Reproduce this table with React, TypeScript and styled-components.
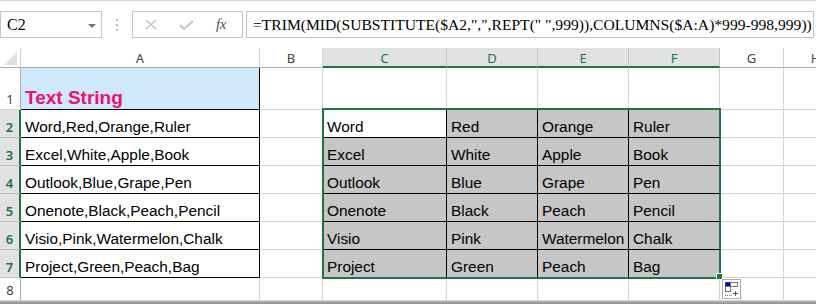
import React from 'react';
import styled, { createGlobalStyle } from 'styled-components';

const GREEN = '#217346';
const GRID = '#d4d4d4';
const INK = '#000';
const SHADE = '#c6c6c6';

const sources = [
  'Word,Red,Orange,Ruler',
  'Excel,White,Apple,Book',
  'Outlook,Blue,Grape,Pen',
  'Onenote,Black,Peach,Pencil',
  'Visio,Pink,Watermelon,Chalk',
  'Project,Green,Peach,Bag',
];

const columns = ['A', 'B', 'C', 'D', 'E', 'F', 'G', 'H'];
const activeCols = ['C', 'D', 'E', 'F'];

const GlobalStyle = createGlobalStyle`
  *, *::before, *::after { box-sizing: border-box; }
  html, body { margin: 0; padding: 0; background: #fff; }
  body { width: 816px; height: 304px; overflow: hidden; }
`;

const Window = styled.div`
  width: 816px;
  height: 304px;
  overflow: hidden;
  background: #fff;
  display: flex;
  flex-direction: column;
`;

const FormulaBar = styled.div`
  height: 48px;
  flex: none;
  border-top: 1px solid #d5d5d5;
  padding-top: 10px;
  display: flex;
  align-items: flex-start;
`;

const NameBox = styled.div`
  width: 102px;
  height: 27px;
  border: 1px solid #c6c6c6;
  display: flex;
  align-items: center;
  justify-content: space-between;
  padding: 0 5px 0 6px;
  font: 16px 'Liberation Serif', 'Times New Roman', serif;
  line-height: 25px;
  color: #000;
`;

const DropArrow = styled.span`
  width: 0;
  height: 0;
  border-left: 4px solid transparent;
  border-right: 4px solid transparent;
  border-top: 4px solid #767676;
  margin-top: 2px;
`;

const Grip = styled.div`
  width: 30px;
  height: 27px;
  display: flex;
  flex-direction: column;
  align-items: center;
  justify-content: center;
  gap: 3px;
`;

const GripDot = styled.span`
  width: 2px;
  height: 2px;
  background: #bdbdbd;
`;

const FuncBox = styled.div`
  width: 111px;
  height: 27px;
  border: 1px solid #c6c6c6;
  display: flex;
  align-items: center;
  gap: 22px;
  padding-left: 12px;
`;

const FxLabel = styled.span`
  font: italic 15px 'Liberation Serif', 'Times New Roman', serif;
  color: #555;
  letter-spacing: -0.5px;
`;

const FormulaInput = styled.div`
  flex: 1;
  height: 27px;
  margin: 0 2px 0 3px;
  border: 1px solid #c6c6c6;
  padding-left: 6px;
  font: 15.6px 'Liberation Serif', 'Times New Roman', serif;
  line-height: 25px;
  color: #000;
  white-space: nowrap;
  overflow: hidden;
`;

const Sheet = styled.div`
  position: relative;
  flex: none;
  display: grid;
  grid-template-columns: 21px 239px 63px 124px 91px 91px 91px 64px 64px;
  grid-template-rows: 20px 42px repeat(6, 28px) 23px;
`;

const Corner = styled.div`
  position: relative;
  border-right: 1px solid ${GRID};
  border-bottom: 1px solid #ababab;
  &::after {
    content: '';
    position: absolute;
    right: 3px;
    bottom: 2px;
    width: 13px;
    height: 13px;
    background: #dfdfdf;
    clip-path: polygon(100% 0, 100% 100%, 0 100%);
  }
`;

const ColHead = styled.div<{ $active?: boolean }>`
  display: flex;
  align-items: center;
  justify-content: center;
  padding-top: 1px;
  font: 13px 'Noto Sans', 'Liberation Sans', sans-serif;
  color: ${p => (p.$active ? GREEN : '#444')};
  background: ${p => (p.$active ? '#e1e1e1' : '#fff')};
  border-right: 1px solid ${p => (p.$active ? '#c3c3c3' : GRID)};
  border-bottom: ${p => (p.$active ? `2px solid ${GREEN}` : '1px solid #ababab')};
`;

const RowHead = styled.div<{ $active?: boolean }>`
  display: flex;
  align-items: flex-end;
  justify-content: center;
  padding-bottom: 2px;
  font: ${p => (p.$active ? 600 : 400)} 13px 'Noto Sans', 'Liberation Sans', sans-serif;
  line-height: 16px;
  color: ${p => (p.$active ? GREEN : '#444')};
  background: ${p => (p.$active ? '#e1e1e1' : '#fff')};
  border-right: ${p => (p.$active ? `2px solid ${GREEN}` : '1px solid #ababab')};
  border-bottom: 1px solid ${p => (p.$active ? '#c3c3c3' : GRID)};
`;

const Cell = styled.div<{ $fill?: string; $right?: string; $bottom?: string }>`
  display: flex;
  align-items: flex-end;
  padding: 0 2px 1px 4px;
  font: 15.4px 'Liberation Sans', Arial, sans-serif;
  line-height: 18px;
  color: #000;
  white-space: nowrap;
  overflow: hidden;
  background: ${p => p.$fill ?? '#fff'};
  border-right: 1px solid ${p => p.$right ?? GRID};
  border-bottom: 1px solid ${p => p.$bottom ?? GRID};
`;

const TitleCell = styled(Cell)`
  padding: 0 2px 0 4px;
  font: bold 19px 'Liberation Sans', Arial, sans-serif;
  line-height: 22px;
  color: #ee1170;
`;

const Selection = styled.div`
  position: absolute;
  left: 322px;
  top: 60px;
  width: 399px;
  height: 171px;
  border: 2px solid ${GREEN};
  pointer-events: none;
`;

const FillHandle = styled.div`
  position: absolute;
  left: 716px;
  top: 225px;
  width: 7px;
  height: 7px;
  background: ${GREEN};
  border: 1px solid #fff;
`;

const PasteOptions = styled.div`
  position: absolute;
  left: 722px;
  top: 231px;
  width: 19px;
  height: 20px;
  background: #fff;
  border: 1px solid #ababab;
  display: flex;
  align-items: center;
  justify-content: center;
`;

const EdgeShade = styled.div`
  flex: none;
  height: 3px;
  background: linear-gradient(#b4b4b4, #8f8f8f);
`;

const CancelIcon = () => (
  <svg width="12" height="11" viewBox="0 0 12 11">
    <path d="M1 1 L11 10 M11 1 L1 10" stroke="#c2c2c2" strokeWidth="1.4" fill="none" />
  </svg>
);

const EnterIcon = () => (
  <svg width="15" height="10" viewBox="0 0 15 10">
    <path d="M1 5 L5 9 L14 1" stroke="#c2c2c2" strokeWidth="1.8" fill="none" />
  </svg>
);

const PasteIcon = () => (
  <svg width="15" height="16" viewBox="0 0 15 16">
    <rect x="1.5" y="1.5" width="5" height="4" fill="#0000ff" stroke="#333" />
    <rect x="6.5" y="1.5" width="7" height="4" fill="#fff" stroke="#777" />
    <rect x="1.5" y="5.5" width="5" height="5" fill="#fff" stroke="#777" />
    <path d="M1 14.5 H9" stroke="#777" strokeDasharray="1 1" />
    <path d="M11.5 10 V15 M9 12.5 H14" stroke="#555" />
  </svg>
);

const SheetRow = ({ row }: { row: number }) => {
  const active = row >= 2 && row <= 7;
  const words = active ? sources[row - 2].split(',') : [];

  return (
    <>
      <RowHead $active={active}>{row}</RowHead>
      {columns.map(col => {
        const key = `${col}${row}`;
        if (col === 'A' && row === 1) {
          return (
            <TitleCell key={key} $fill="#cde9fb" $right={INK} $bottom={INK}>
              Text String
            </TitleCell>
          );
        }
        if (col === 'A' && active) {
          return (
            <Cell key={key} $right={INK} $bottom={INK}>
              {sources[row - 2]}
            </Cell>
          );
        }
        const idx = activeCols.indexOf(col);
        if (idx >= 0 && active) {
          const plain = row === 2 && col === 'C';
          return (
            <Cell key={key} $fill={plain ? '#fff' : SHADE} $right={INK} $bottom={INK}>
              {words[idx]}
            </Cell>
          );
        }
        return <Cell key={key} />;
      })}
    </>
  );
};

const App = () => (
  <Window>
    <GlobalStyle />
    <FormulaBar>
      <NameBox>
        C2
        <DropArrow />
      </NameBox>
      <Grip>
        <GripDot />
        <GripDot />
        <GripDot />
      </Grip>
      <FuncBox>
        <CancelIcon />
        <EnterIcon />
        <FxLabel>fx</FxLabel>
      </FuncBox>
      <FormulaInput>=TRIM(MID(SUBSTITUTE($A2,",",REPT(" ",999)),COLUMNS($A:A)*999-998,999))</FormulaInput>
    </FormulaBar>
    <Sheet>
      <Corner />
      {columns.map(col => (
        <ColHead key={col} $active={activeCols.includes(col)}>
          {col}
        </ColHead>
      ))}
      {[1, 2, 3, 4, 5, 6, 7, 8].map(row => (
        <SheetRow key={row} row={row} />
      ))}
      <Selection />
      <FillHandle />
      <PasteOptions>
        <PasteIcon />
      </PasteOptions>
    </Sheet>
    <EdgeShade />
  </Window>
);

export default App;
